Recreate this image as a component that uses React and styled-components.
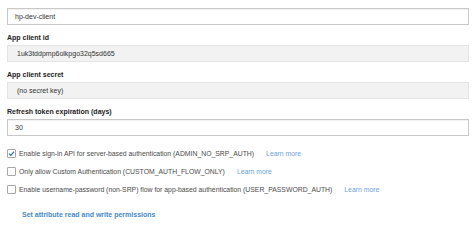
import React from "react";
import styled, { createGlobalStyle } from "styled-components";

const Global = createGlobalStyle`
  html, body { margin: 0; padding: 0; background: #fff; }
  body { font-family: "Liberation Sans", Arial, sans-serif; color: #444; }
`;

const Page = styled.div`
  width: 474px;
  height: 241px;
  box-sizing: border-box;
  padding: 8px 5px 0 7px;
  display: flex;
  flex-direction: column;
`;

const Field = styled.div`
  display: flex;
  flex-direction: column;
  margin-top: ${(p) => (p.first ? 0 : 9)}px;
`;

const Label = styled.div`
  font-size: 7px;
  font-weight: bold;
  color: #222;
  line-height: 8px;
  margin-bottom: 3px;
`;

const Box = styled.div`
  height: 17px;
  box-sizing: border-box;
  border: 1px solid ${(p) => (p.readOnly ? "#e4e4e4" : "#c8c8c8")};
  background: ${(p) => (p.readOnly ? "#f2f2f2" : "#fff")};
  box-shadow: ${(p) => (p.readOnly ? "none" : "inset 0 1px 1px rgba(0,0,0,0.06)")};
  padding: 0 0 0 ${(p) => (p.readOnly ? 9 : 7)}px;
  display: flex;
  align-items: center;
  font-size: 7px;
  color: #333;
`;

const Options = styled.div`
  display: flex;
  flex-direction: column;
  margin-top: 13px;
  gap: 9px;
`;

const Option = styled.label`
  display: flex;
  align-items: center;
  height: 9px;
  font-size: 6.85px;
  color: #4a4a4a;
`;

const Check = styled.span`
  width: 9px;
  height: 9px;
  box-sizing: border-box;
  border: 1px solid #a8a8a8;
  border-radius: 1px;
  background: #fff;
  margin-right: 3px;
  display: flex;
  align-items: center;
  justify-content: center;
  flex-shrink: 0;
`;

const Learn = styled.a`
  color: #6ea3d8;
  margin-left: 12px;
  text-decoration: none;
`;

const Perm = styled.a`
  margin-top: 17px;
  margin-left: 15px;
  font-size: 7px;
  font-weight: bold;
  color: #4689c8;
  text-decoration: none;
`;

const options = [
  { text: "Enable sign-in API for server-based authentication (ADMIN_NO_SRP_AUTH)", checked: true },
  { text: "Only allow Custom Authentication (CUSTOM_AUTH_FLOW_ONLY)", checked: false },
  { text: "Enable username-password (non-SRP) flow for app-based authentication (USER_PASSWORD_AUTH)", checked: false },
];

export default function App() {
  return (
    <>
      <Global />
      <Page>
        <Field first>
          <Box>hp-dev-client</Box>
        </Field>
        <Field>
          <Label>App client id</Label>
          <Box readOnly>1uk3tddpmp6olkpgo32q5sd665</Box>
        </Field>
        <Field>
          <Label>App client secret</Label>
          <Box readOnly>(no secret key)</Box>
        </Field>
        <Field>
          <Label>Refresh token expiration (days)</Label>
          <Box>30</Box>
        </Field>
        <Options>
          {options.map((o) => (
            <Option key={o.text}>
              <Check>
                {o.checked && (
                  <svg width="7" height="7" viewBox="0 0 10 10">
                    <path d="M1.5 5.2 L4 7.6 L8.6 2.2" fill="none" stroke="#2e6fb5" strokeWidth="1.8" />
                  </svg>
                )}
              </Check>
              <span>{o.text}</span>
              <Learn>Learn more</Learn>
            </Option>
          ))}
        </Options>
        <Perm>Set attribute read and write permissions</Perm>
      </Page>
    </>
  );
}
